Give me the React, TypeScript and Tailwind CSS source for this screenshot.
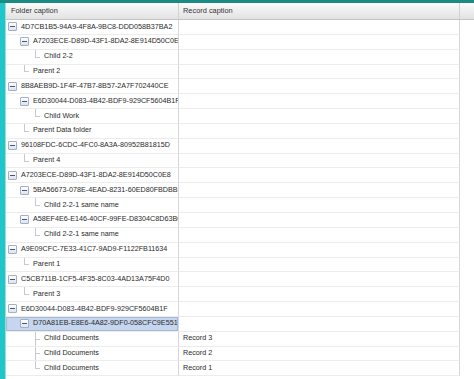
type Row = {
  level: number
  text: string
  kind: 'node' | 'leaf' | 'tee'
  record?: string
  selected?: boolean
}

const rows: Row[] = [
  { level: 0, kind: 'node', text: '4D7CB1B5-94A9-4F8A-9BC8-DDD058B37BA2' },
  { level: 1, kind: 'node', text: 'A7203ECE-D89D-43F1-8DA2-8E914D50C0E8' },
  { level: 2, kind: 'leaf', text: 'Child 2-2' },
  { level: 1, kind: 'leaf', text: 'Parent 2' },
  { level: 0, kind: 'node', text: '8B8AEB9D-1F4F-47B7-8B57-2A7F702440CE' },
  { level: 1, kind: 'node', text: 'E6D30044-D083-4B42-BDF9-929CF5604B1F' },
  { level: 2, kind: 'leaf', text: 'Child Work' },
  { level: 1, kind: 'leaf', text: 'Parent Data folder' },
  { level: 0, kind: 'node', text: '96108FDC-6CDC-4FC0-8A3A-80952B81815D' },
  { level: 1, kind: 'leaf', text: 'Parent 4' },
  { level: 0, kind: 'node', text: 'A7203ECE-D89D-43F1-8DA2-8E914D50C0E8' },
  { level: 1, kind: 'node', text: '5BA56673-078E-4EAD-8231-60ED80FBDBB6' },
  { level: 2, kind: 'leaf', text: 'Child 2-2-1 same name' },
  { level: 1, kind: 'node', text: 'A58EF4E6-E146-40CF-99FE-D8304C8D63B0' },
  { level: 2, kind: 'leaf', text: 'Child 2-2-1 same name' },
  { level: 0, kind: 'node', text: 'A9E09CFC-7E33-41C7-9AD9-F1122FB11634' },
  { level: 1, kind: 'leaf', text: 'Parent 1' },
  { level: 0, kind: 'node', text: 'C5CB711B-1CF5-4F35-8C03-4AD13A75F4D0' },
  { level: 1, kind: 'leaf', text: 'Parent 3' },
  { level: 0, kind: 'node', text: 'E6D30044-D083-4B42-BDF9-929CF5604B1F' },
  { level: 1, kind: 'node', text: 'D70A81EB-E8E6-4A82-9DF0-058CFC9E5513', selected: true },
  { level: 2, kind: 'tee', text: 'Child Documents', record: 'Record 3' },
  { level: 2, kind: 'tee', text: 'Child Documents', record: 'Record 2' },
  { level: 2, kind: 'leaf', text: 'Child Documents', record: 'Record 1' },
]

const indents = ['pl-0', 'pl-[12px]', 'pl-[23px]']

function MinusBox() {
  return (
    <div className="w-[9px] h-[9px] border border-[#a3afc2] rounded-[1px] bg-gradient-to-b from-white to-[#dbe3ef] flex items-center justify-center">
      <div className="w-[5px] h-[1px] bg-[#45577c]" />
    </div>
  )
}

function TreeLine({ tee }: { tee: boolean }) {
  return (
    <div className="relative w-full h-full">
      <div className={`absolute left-[6px] top-0 w-px bg-[#c9c9c9] ${tee ? 'h-full' : 'h-1/2'}`} />
      <div className="absolute left-[6px] top-1/2 w-[5px] h-px bg-[#c9c9c9]" />
    </div>
  )
}

export default function App() {
  return (
    <div className="w-[474px] h-[379px] overflow-hidden bg-white flex flex-col text-[7.2px] text-[#2a2a2a] [font-family:'Liberation_Sans',Arial,sans-serif]">
      <div className="h-[3px] bg-[#1b8a82] shrink-0" />
      <div className="flex flex-1 min-h-0">
        <div className="w-[5px] bg-[#22c5c8] shrink-0" />
        <div className="flex-1 border-l border-[#c9c9c9] flex flex-col min-w-0">
          <div className="h-[17px] shrink-0 flex bg-gradient-to-b from-[#fbfbfb] to-[#e2e2e2] border-b border-[#c4c4c4] text-[#333] text-[7.4px]">
            <div className="w-[173px] border-r border-[#d2d2d2] flex items-center pl-[5px]">Folder caption</div>
            <div className="w-[281px] border-r border-[#d2d2d2] flex items-center pl-[4px]">Record caption</div>
            <div className="flex-1" />
          </div>
          <div className="flex-1 flex flex-col">
            {rows.map((r, i) => (
              <div key={i} className="flex h-[14.85px] shrink-0">
                <div className="w-[173px] border-r border-[#d6d6d6] border-b border-b-[#ececec]">
                  <div
                    className={`h-full flex items-center overflow-hidden whitespace-nowrap ${indents[r.level]} ${
                      r.selected ? 'bg-[#c6d6ee] outline outline-1 -outline-offset-1 outline-[#a6b9d8]' : ''
                    }`}
                  >
                    <div className="w-[13px] h-full shrink-0 flex items-center justify-center">
                      {r.kind === 'node' ? <MinusBox /> : <TreeLine tee={r.kind === 'tee'} />}
                    </div>
                    <span className="ml-[2px]">{r.text}</span>
                  </div>
                </div>
                <div className="w-[281px] border-r border-[#d6d6d6] border-b border-b-[#ececec] flex items-center pl-[4px]">
                  {r.record}
                </div>
              </div>
            ))}
          </div>
        </div>
      </div>
    </div>
  )
}
